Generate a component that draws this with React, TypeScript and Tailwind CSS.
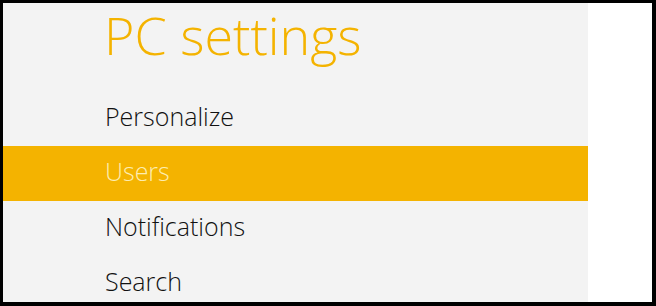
const items = ["Personalize", "Users", "Notifications", "Search"];

export default function App() {
  return (
    <div className="flex h-[306px] w-[656px] border-t-[3px] border-l-[3px] border-r-4 border-b-4 border-black bg-white font-['Open_Sans',sans-serif]">
      <div className="flex w-[585px] flex-col overflow-hidden bg-[#f3f3f3]">
        <div className="h-[88px] shrink-0 pl-[101px]">
          <h1 className="text-[52px] font-light leading-[64px] text-[#f4b300]">PC settings</h1>
        </div>
        {items.map((item) => (
          <div
            key={item}
            className={
              item === "Users"
                ? "h-[55px] shrink-0 bg-[#f4b300] pb-1 pl-[102px] text-[25px] font-light leading-[51px] text-[#fdedb0]"
                : "h-[55px] shrink-0 pb-1 pl-[102px] text-[25px] font-light leading-[51px] text-[#111]"
            }
          >
            {item}
          </div>
        ))}
      </div>
    </div>
  );
}
